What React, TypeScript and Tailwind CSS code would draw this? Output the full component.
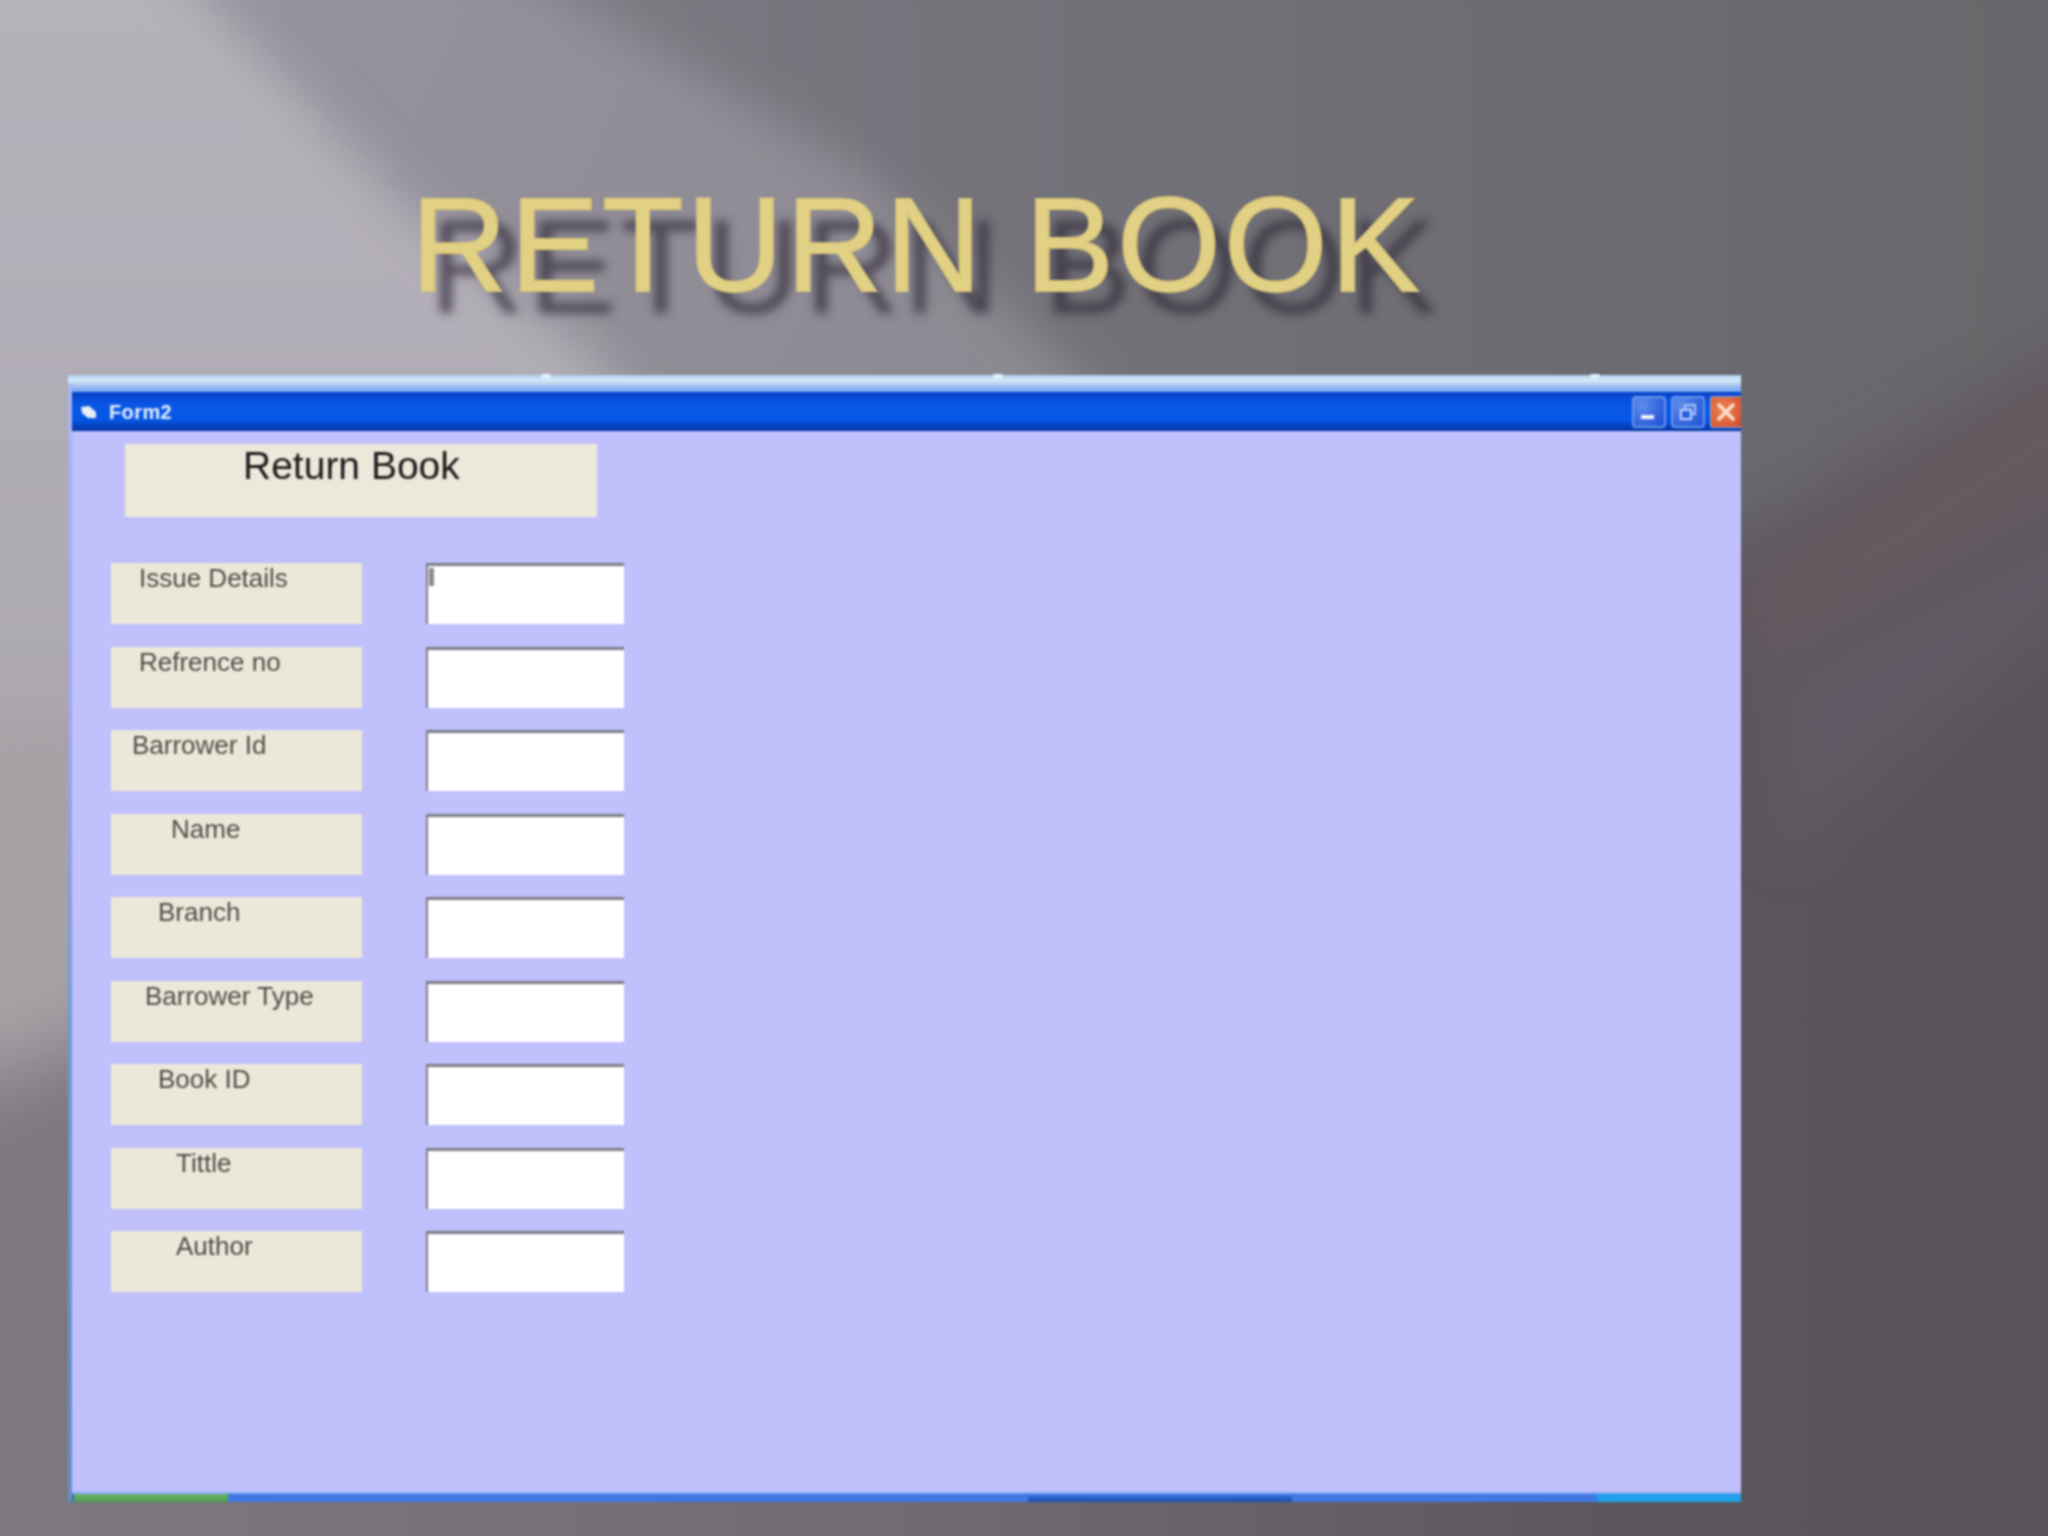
import React from "react";

const rows = [
  { label: "Issue Details", pad: "pl-[28px]", caret: true },
  { label: "Refrence no", pad: "pl-[28px]" },
  { label: "Barrower Id", pad: "pl-[21px]" },
  { label: "Name", pad: "pl-[60px]" },
  { label: "Branch", pad: "pl-[47px]" },
  { label: "Barrower Type", pad: "pl-[34px]" },
  { label: "Book ID", pad: "pl-[47px]" },
  { label: "Tittle", pad: "pl-[65px]" },
  { label: "Author", pad: "pl-[65px]" },
];

function Backdrop() {
  return (
    <svg className="absolute inset-0 w-full h-full" viewBox="0 0 2048 1536" preserveAspectRatio="none" aria-hidden="true">
      <defs>
        <linearGradient id="base" x1="0" y1="0" x2="1" y2="0">
          <stop offset="0" stopColor="#7d797f" />
          <stop offset="0.45" stopColor="#6f6b71" />
          <stop offset="0.8" stopColor="#5b565c" />
          <stop offset="1" stopColor="#5a5359" />
        </linearGradient>
        <linearGradient id="top" x1="0" y1="0" x2="1" y2="0">
          <stop offset="0" stopColor="#8f8c96" />
          <stop offset="0.4" stopColor="#76747c" />
          <stop offset="1" stopColor="#666468" />
        </linearGradient>
        <linearGradient id="mid" x1="0" y1="0" x2="1" y2="0.3">
          <stop offset="0" stopColor="#9a97a2" />
          <stop offset="1" stopColor="#8c8992" />
        </linearGradient>
        <linearGradient id="light" x1="0" y1="0" x2="0" y2="1">
          <stop offset="0" stopColor="#b6b3ba" />
          <stop offset="0.5" stopColor="#b2aeb7" />
          <stop offset="1" stopColor="#acA8ae" />
        </linearGradient>
        <filter id="soft" filterUnits="userSpaceOnUse" x="-200" y="-200" width="2448" height="1936">
          <feGaussianBlur stdDeviation="24" />
        </filter>
        <filter id="softer" filterUnits="userSpaceOnUse" x="-200" y="-200" width="2448" height="1936">
          <feGaussianBlur stdDeviation="40" />
        </filter>
      </defs>
      <rect width="2048" height="1536" fill="url(#base)" />
      <polygon points="-100,-100 2200,-100 2200,300 1740,540 1000,640 -100,900" fill="url(#top)" filter="url(#softer)" />
      <polygon points="1740,580 2200,280 2200,440 1760,680" fill="#665a60" filter="url(#soft)" />
      <polygon points="1760,680 2200,440 2200,510 1780,860" fill="#5e5a64" filter="url(#soft)" />
      <polygon points="-100,-100 400,-100 860,170 1120,420 1000,640 -100,700" fill="url(#mid)" filter="url(#soft)" />
      <polygon points="-100,600 640,600 640,800 70,1050 -100,1110" fill="#a6a2a6" filter="url(#softer)" />
      <polygon points="-100,-100 110,-100 400,200 610,370 640,430 640,700 -100,720" fill="url(#light)" filter="url(#soft)" />
    </svg>
  );
}

function TitleBarButton({ kind }: { kind: "min" | "max" | "close" }) {
  if (kind === "close") {
    return (
      <div className="w-[31px] h-[32px] rounded-l-[3px] border-l border-t border-b border-[#8fb4f0] bg-[radial-gradient(circle_at_40%_40%,#ee8455,#d04a26)] flex items-center justify-center">
        <svg width="22" height="22" viewBox="0 0 22 22" aria-hidden="true">
          <path d="M4 4 L18 18 M18 4 L4 18" stroke="#fbe0cc" strokeWidth="3.6" strokeLinecap="round" />
        </svg>
      </div>
    );
  }
  return (
    <div className="w-[34px] h-[32px] rounded-[4px] border-2 border-[#6a98ee] bg-[radial-gradient(circle_at_25%_25%,#5f8cea,#1a4ed4)] flex items-center justify-center">
      {kind === "min" ? (
        <svg width="26" height="24" viewBox="0 0 26 24" aria-hidden="true">
          <rect x="5" y="15" width="13" height="4" fill="#f2f6ff" />
        </svg>
      ) : (
        <svg width="24" height="24" viewBox="0 0 24 24" fill="none" aria-hidden="true">
          <rect x="9" y="5" width="10" height="9" stroke="#a8c2f6" strokeWidth="2" />
          <rect x="5" y="10" width="10" height="9" fill="#2a5ee0" stroke="#c4d6fb" strokeWidth="2" />
        </svg>
      )}
    </div>
  );
}

export default function App() {
  return (
    <div className="relative w-[2048px] h-[1536px] overflow-hidden bg-[#5a5359] font-['Liberation_Sans',Arial,sans-serif]">
      <Backdrop />
      <div className="relative flex flex-col">
        <div className="h-[375px] pt-[179px] pl-[411px]">
          <h1 className="text-[133px] leading-none tracking-[3.3px] text-[#e2d184] whitespace-nowrap blur-[0.8px] [-webkit-text-stroke:2px_#dcc97c] [text-shadow:18px_22px_10px_rgba(42,38,52,0.66)]">
            RETURN BOOK
          </h1>
        </div>

        <div className="ml-[68px] w-[1673px] flex flex-col blur-[0.8px]">
          <div className="relative h-[9px] bg-[linear-gradient(to_bottom,#a8cff0,#d8eaf8_55%,#b8d6ee)]">
            <span className="absolute left-[473px] -top-[1px] w-[10px] h-[4px] rounded-full bg-[#e6f2fc]" />
            <span className="absolute left-[925px] -top-[1px] w-[10px] h-[4px] rounded-full bg-[#e6f2fc]" />
            <span className="absolute left-[1522px] -top-[1px] w-[10px] h-[4px] rounded-full bg-[#e6f2fc]" />
          </div>
          <div className="flex">
            <div className="w-[4px] bg-[linear-gradient(to_bottom,#a9b5f3,#a2a6ec_30%,#6e98d8_60%,#6a8cc8)]" />
            <div className="flex-1 flex flex-col">
              <div className="h-[8px] bg-[linear-gradient(to_bottom,#b4cbf4,#6ea4f4)]" />
              <div className="h-[39px] flex items-center bg-[linear-gradient(to_bottom,#0840c8,#0a56e4_30%,#0658e8_70%,#0234a4)]">
                <svg className="ml-[8px]" width="18" height="16" viewBox="0 0 18 16" aria-hidden="true">
                  <path d="M1 3 L9 2 L16 8 L16 14 L8 14 L2 9 Z" fill="#e8eef8" />
                </svg>
                <span className="ml-[11px] text-[20px] font-bold tracking-[0.4px] text-[#e8f0ff]">Form2</span>
                <div className="ml-auto flex gap-[5px]">
                  <TitleBarButton kind="min" />
                  <TitleBarButton kind="max" />
                  <TitleBarButton kind="close" />
                </div>
              </div>
              <div className="h-[1061px] bg-[#c0c0fc] pt-[13px]">
                <div className="ml-[53px] w-[472px] h-[73px] bg-[#ece8da] pl-[118px] text-[39px] leading-[44px] text-[#1a1a1a]">
                  Return Book
                </div>
                <div className="mt-[46px] ml-[39px] flex flex-col gap-[22.5px]">
                  {rows.map((r) => (
                    <div key={r.label} className="flex gap-[64px] h-[61px]">
                      <div className={`w-[251px] bg-[#ece8d9] pt-[1px] text-[26px] leading-[28px] text-[#4c4c48] ${r.pad}`}>{r.label}</div>
                      <div className="w-[198px] bg-white border-t-[3px] border-l-[2px] border-[#7c7c86] pl-[1px] pt-[2px]">
                        {r.caret && <div className="w-[5px] h-[18px] bg-[#8a8a92]" />}
                      </div>
                    </div>
                  ))}
                </div>
              </div>
              <div className="h-[10px] flex border-t-2 border-[#82aaf4]">
                <div className="w-[2px] bg-[#3a6ea8]" />
                <div className="w-[154px] bg-[linear-gradient(to_bottom,#6cb46c,#4c9c50)]" />
                <div className="w-[800px] bg-[#3f78e2]" />
                <div className="w-[264px] bg-[linear-gradient(to_bottom,#3f78e2,#1c4cb0)]" />
                <div className="w-[305px] bg-[#3f78e2]" />
                <div className="flex-1 bg-[#20a0ea]" />
              </div>
            </div>
          </div>
        </div>
      </div>
    </div>
  );
}
